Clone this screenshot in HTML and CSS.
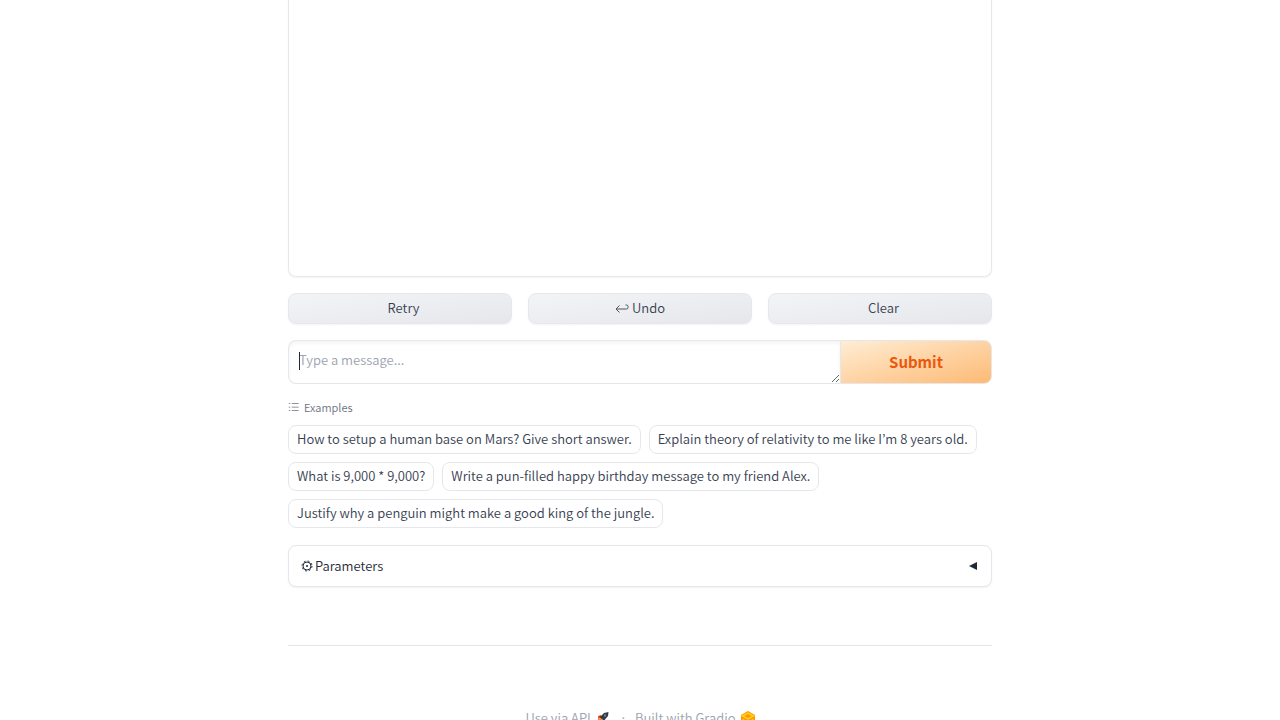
FILE: index.html
```
<!DOCTYPE html>
<html lang="en">
<head>
  <meta charset="UTF-8">
  <meta name="viewport" content="width=device-width, initial-scale=1.0">
  <title>Chat</title>
  <link rel="stylesheet" href="styles.css">
</head>
<body>
  <main class="container">
    <div class="chatbot"></div>
    <div class="button-row">
      <button class="secondary-btn no-icon" type="button">Retry</button>
      <button class="secondary-btn" type="button">
        <svg class="undo-icon" viewBox="0 0 14 10" aria-hidden="true">
          <path d="M4.500 2.500 1 6l3.500 3.500M1 6h10.500q1.500 0 1.500-1.500v-1q0-1.500-1.500-1.500h-1"/>
        </svg>
        Undo
      </button>
      <button class="secondary-btn no-icon" type="button">Clear</button>
    </div>
    <form class="message-row">
      <textarea class="message-field" name="message" rows="1" placeholder="Type a message..." aria-label="Message"></textarea>
      <button class="submit-btn" type="button">Submit</button>
    </form>
    <section class="examples">
      <div class="examples-label">
        <svg class="list-icon" viewBox="0 0 32 32" aria-hidden="true">
          <path d="M10 6h18.500v2H10zM10 24h18.500v2H10zM10 15h18.500v2H10zM2 15h4v2H2zM2 6h4v2H2zM2 24h4v2H2z"/>
        </svg>
        Examples
      </div>
      <div class="gallery">
        <button class="example" type="button">How to setup a human base on Mars? Give short answer.</button>
        <button class="example" type="button">Explain theory of relativity to me like I’m 8 years old.</button>
        <button class="example" type="button">What is 9,000 * 9,000?</button>
        <button class="example" type="button">Write a pun-filled happy birthday message to my friend Alex.</button>
        <button class="example" type="button">Justify why a penguin might make a good king of the jungle.</button>
      </div>
    </section>
    <button class="accordion" type="button" aria-expanded="false">
      <svg class="gear-icon" viewBox="0 0 12 12" aria-hidden="true">
        <circle class="gear-teeth" cx="6" cy="6" r="5"/>
        <circle class="gear-ring" cx="6" cy="6" r="4"/>
        <circle class="gear-hub" cx="6" cy="6" r="1"/>
      </svg>
      <span>Parameters</span>
      <svg class="arrow-icon" viewBox="0 0 8 8" aria-hidden="true">
        <path d="M0 4 8 0v8z"/>
      </svg>
    </button>
    <hr class="divider">
  </main>
  <footer class="footer">
    <a href="#api">Use via API
      <svg class="footer-icon" viewBox="0 0 14 14" aria-hidden="true">
        <path fill="#fb8c2b" d="M2 8l3-1 2 3-6 4z"/>
        <path fill="#ff4d23" d="M2 5l3-1 1 2-4 2z"/>
        <path fill="#353c46" d="M12.500 1 12 5 9 8.500 8 11 6.500 8.500 4.500 7 3 6l2.500-1.500L8 2z"/>
        <path fill="#77808b" d="M8 3.500h2v2H8z"/>
      </svg>
    </a>
    <span class="dot">·</span>
    <a href="#gradio">Built with Gradio
      <svg class="footer-icon" viewBox="0 0 14 14" aria-hidden="true">
        <path fill="#ff9900" d="M7 0 14 4v6l-7 4-7-4V4z"/>
        <path fill="none" stroke="#ffd21e" stroke-width="1.500" d="M1.500 5 7 2l5.500 3L7 8zM1.500 8.500 7 11.500l5.500-3"/>
      </svg>
    </a>
  </footer>
</body>
</html>
```
FILE: styles.css
```
* {
  box-sizing: border-box;
}
body {
  margin: 0;
  height: 100vh;
  overflow: hidden;
  background: #fff;
  color: #1f2937;
  font-family: "Noto Sans CJK KR", "Noto Sans", sans-serif;
  font-size: 13px;
  font-weight: 350;
  line-height: 20px;
}
button,
textarea {
  font: inherit;
  color: inherit;
}
button {
  cursor: pointer;
}
.container {
  display: flex;
  flex-direction: column;
  gap: 16px;
  width: 55%;
  margin: 0 auto;
}
.chatbot {
  height: 277px;
  border: 1px solid #e5e7eb;
  border-top: none;
  border-radius: 0 0 8px 8px;
  box-shadow: 0 1px 2px rgba(0, 0, 0, 0.05);
}
.button-row {
  display: grid;
  grid-template-columns: repeat(3, 1fr);
  gap: 16px;
}
.secondary-btn {
  display: flex;
  align-items: center;
  justify-content: center;
  gap: 3px;
  height: 31px;
  padding: 0 8px 2px;
  border: 1px solid #e5e7eb;
  border-radius: 8px;
  background: linear-gradient(to bottom right, #f3f4f6, #e5e7eb);
  box-shadow: 0 1px 2px rgba(0, 0, 0, 0.05);
  color: #374151;
}
.no-icon {
  padding-left: 15px;
}
.undo-icon {
  width: 14px;
  height: 10px;
  fill: none;
  stroke: #4b5563;
}
.message-row {
  position: relative;
  display: flex;
  height: 44px;
  margin: 0;
}
/* text cursor */
.message-row::before {
  content: "";
  position: absolute;
  top: 12px;
  left: 11px;
  width: 1px;
  height: 18px;
  background: #1f2937;
}
.message-field {
  flex: 1;
  min-width: 0;
  padding: 9px 10px;
  border: 1px solid #e5e7eb;
  border-right: none;
  border-radius: 8px 0 0 8px;
  outline: none;
  background: #fff;
  box-shadow: inset 0 2px 4px rgba(0, 0, 0, 0.05);
  overflow: hidden;
}
.message-field::placeholder {
  color: #9ca3af;
}
.submit-btn {
  width: 152px;
  border: 1px solid #e5e7eb;
  border-radius: 0 8px 8px 0;
  background: linear-gradient(to bottom right, #ffedd5, #fdba74);
  color: #ea580c;
  font-size: 15px;
  font-weight: 600;
}
.examples-label {
  display: flex;
  align-items: center;
  gap: 4px;
  height: 14px;
  margin-bottom: 11px;
  color: #6b7280;
  font-size: 11px;
}
.list-icon {
  width: 12px;
  height: 12px;
  fill: #6b7280;
}
.gallery {
  display: flex;
  flex-wrap: wrap;
  gap: 8px;
}
.example {
  height: 29px;
  padding: 0 8px 2px;
  border: 1px solid #e5e7eb;
  border-radius: 8px;
  background: #fff;
  color: #374151;
}
.accordion {
  display: flex;
  align-items: center;
  gap: 2px;
  height: 42px;
  margin-top: 1px;
  padding: 0 14px 1px 12px;
  border: 1px solid #e5e7eb;
  border-radius: 8px;
  background: #fff;
  box-shadow: 0 1px 2px rgba(0, 0, 0, 0.05);
}
.gear-icon {
  width: 12px;
  height: 12px;
  fill: none;
  stroke: #1f2937;
}
.gear-teeth {
  stroke-width: 1;
  stroke-dasharray: 1.900 2.027;
}
.gear-hub {
  fill: #1f2937;
  stroke: none;
}
.arrow-icon {
  width: 8px;
  height: 8px;
  margin-left: auto;
  fill: #1f2937;
}
.divider {
  width: 100%;
  margin: 42px 0 0;
  border: none;
  border-top: 1px solid #e5e7eb;
}
.footer {
  display: flex;
  justify-content: center;
  margin-top: 62px;
  color: #9ca3af;
}
.footer a {
  display: flex;
  align-items: center;
  gap: 5px;
  color: inherit;
  text-decoration: none;
}
.footer-icon {
  width: 14px;
  height: 14px;
}
.dot {
  margin: 0 8px 0 10px;
}
```
